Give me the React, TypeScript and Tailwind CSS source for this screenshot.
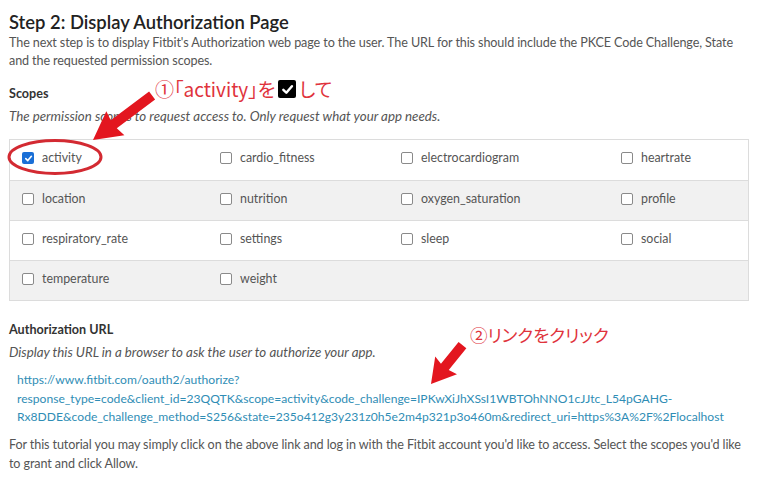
import React from "react";

const rows: string[][] = [
  ["activity", "cardio_fitness", "electrocardiogram", "heartrate"],
  ["location", "nutrition", "oxygen_saturation", "profile"],
  ["respiratory_rate", "settings", "sleep", "social"],
  ["temperature", "weight", "", ""],
];

function Box({ checked }: { checked?: boolean }) {
  if (checked) {
    return (
      <span className="flex h-[12px] w-[12px] items-center justify-center rounded-[2px] bg-[#1a6fd6]">
        <svg width="9" height="9" viewBox="0 0 10 10">
          <path d="M2 5.2 L4.2 7.3 L8.2 2.6" fill="none" stroke="#fff" strokeWidth="1.8" strokeLinecap="round" strokeLinejoin="round" />
        </svg>
      </span>
    );
  }
  return <span className="block h-[12px] w-[12px] rounded-[2px] border border-[#8a8a8a] bg-white" />;
}

export default function App() {
  const font = { fontFamily: 'Lato, "Open Sans", "Noto Sans", sans-serif' };
  const jp = { fontFamily: '"Noto Sans CJK JP", sans-serif', fontFeatureSettings: '"palt"' };
  return (
    <div className="relative h-[486px] w-[768px] overflow-hidden bg-white text-[#555]" style={font}>
      <div className="w-[758px] pl-[9px] pt-[10px]">
        <h2 className="text-[18.4px] font-semibold leading-[24px] text-[#222]">Step 2: Display Authorization Page</h2>
        <p className="w-[736px] text-[12.6px] leading-[18px] tracking-[-0.11px]">
          The next step is to display Fitbit's Authorization web page to the user. The URL for this should include the PKCE Code Challenge, State and the requested permission scopes.
        </p>
        <h3 className="mt-[15px] text-[12.6px] font-bold leading-[18px] text-[#333]">Scopes</h3>
        <p className="mt-[4px] text-[13.3px] italic leading-[18px]">
          The permission scopes to request access to. Only request what your app needs.
        </p>
        <div className="mt-[14px] w-[740px] border border-[#dcdcdc]">
          {rows.map((r, i) => (
            <div
              key={i}
              className={`grid h-[40px] grid-cols-[198px_181px_220px_139px] items-center ${i % 2 === 1 ? "bg-[#f1f1f1]" : "bg-white"} ${i > 0 ? "border-t border-[#dcdcdc]" : ""}`}
            >
              {r.map((s, j) => (
                <div key={j} className="flex items-center gap-[8px] pb-[3px] pl-[12px] text-[12.4px]">
                  {s && <Box checked={s === "activity"} />}
                  {s && <span>{s}</span>}
                </div>
              ))}
            </div>
          ))}
        </div>
        <h3 className="mt-[20px] text-[12.6px] font-bold leading-[18px] text-[#333]">Authorization URL</h3>
        <p className="mt-[4px] text-[13.3px] italic leading-[18px]">
          Display this URL in a browser to ask the user to authorize your app.
        </p>
        <div className="mt-[10px] pl-[8px] text-[12.1px] leading-[18.5px]">
          <a className="text-[#2f8db5]" href="#">
            https://www.fitbit.com/oauth2/authorize?
            <br />
            response_type=code&amp;client_id=23QQTK&amp;scope=activity&amp;code_challenge=IPKwXiJhXSsI1WBTOhNNO1cJJtc_L54pGAHG-
            <br />
            Rx8DDE&amp;code_challenge_method=S256&amp;state=235o412g3y231z0h5e2m4p321p3o460m&amp;redirect_uri=https%3A%2F%2Flocalhost
          </a>
        </div>
        <p className="mt-[8px] w-[736px] text-[12.6px] leading-[19px] tracking-[-0.11px]">
          For this tutorial you may simply click on the above link and log in with the Fitbit account you'd like to access. Select the scopes you'd like to grant and click Allow.
        </p>
      </div>

      {/* annotations */}
      <div className="absolute left-[155px] top-[77px] flex items-center text-[19px] leading-[24px] text-[#e0333c]" style={jp}>
        <span>①「activity」を</span>
        <span className="mx-[3px] flex h-[18px] w-[18px] items-center justify-center rounded-[2px] bg-black">
          <svg width="13" height="13" viewBox="0 0 10 10">
            <path d="M1.8 5.2 L4.1 7.5 L8.4 2.5" fill="none" stroke="#fff" strokeWidth="1.9" strokeLinecap="round" strokeLinejoin="round" />
          </svg>
        </span>
        <span>して</span>
      </div>
      <div className="absolute left-[470px] top-[323px] text-[17.5px] leading-[24px] text-[#e0333c]" style={jp}>
        ②リンクをクリック
      </div>

      <svg className="pointer-events-none absolute left-0 top-0" width="768" height="486">
        <ellipse cx="55" cy="157" rx="46" ry="16.5" fill="none" stroke="#d32a32" strokeWidth="3" />
        <g transform="translate(93 140) rotate(-37)">
          <polygon points="0,0 28,-15 26,-5 74,-5 74,5 26,5 28,15" fill="#e3161f" />
        </g>
        <g transform="translate(431 384) rotate(-51)">
          <polygon points="0,0 24,-14 22,-5 50,-5 50,5 22,5 24,14" fill="#e3161f" />
        </g>
      </svg>
    </div>
  );
}
